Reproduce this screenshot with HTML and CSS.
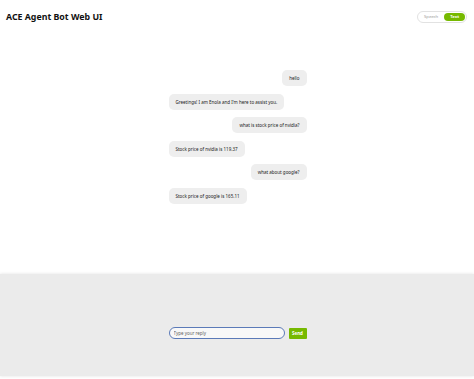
FILE: index.html
```html
<!DOCTYPE html>
<html lang="en">
<head>
<meta charset="utf-8">
<title>ACE Agent Bot Web UI</title>
<link rel="stylesheet" href="styles.css">
</head>
<body>
<div class="page">
  <header class="topbar">
    <h1 class="title">ACE Agent Bot Web UI</h1>
    <div class="toggle">
      <span class="opt">Speech</span>
      <span class="opt active">Text</span>
    </div>
  </header>
  <main class="chat">
    <div class="col">
      <div class="msg user">hello</div>
      <div class="msg bot">Greetings! I am Enola and I'm here to assist you.</div>
      <div class="msg user">what is stock price of nvidia?</div>
      <div class="msg bot">Stock price of nvidia is 119.37</div>
      <div class="msg user">what about google?</div>
      <div class="msg bot">Stock price of google is 165.11</div>
    </div>
  </main>
  <footer class="composer">
    <div class="inputrow">
      <input class="reply" type="text" placeholder="Type your reply">
      <button class="send">Send</button>
    </div>
  </footer>
</div>
</body>
</html>
```
FILE: styles.css
```css
html, body {
  margin: 0;
  padding: 0;
  background: #ffffff;
  font-family: "Noto Sans", "Open Sans", sans-serif;
  color: #1a1a1a;
}
.page {
  width: 474px;
  height: 379px;
  display: flex;
  flex-direction: column;
  overflow: hidden;
}
.topbar {
  display: flex;
  justify-content: space-between;
  align-items: center;
  padding: 9px 7px 0 6px;
  height: 16px;
}
.title {
  margin: 0;
  font-size: 8.8px;
  font-weight: 700;
  line-height: 12px;
  color: #111;
}
.toggle {
  display: flex;
  align-items: center;
  border: 1px solid #e2e2e2;
  border-radius: 6px;
  padding: 1px;
  height: 8px;
  gap: 1px;
}
.opt {
  font-size: 4.2px;
  color: #999;
  padding: 0 5px;
  line-height: 8px;
  border-radius: 5px;
}
.opt.active {
  background: #76b900;
  color: #fff;
  font-weight: 700;
  padding: 0 6px;
}
.chat {
  flex: 1;
  display: flex;
  justify-content: center;
  padding-top: 45px;
}
.col {
  width: 138px;
  margin-left: 1px;
  display: flex;
  flex-direction: column;
  gap: 7.6px;
}
.msg {
  font-size: 4.5px;
  line-height: 16px;
  padding: 0 7px;
  background: #eeeeee;
  border-radius: 5px;
  color: #222;
  white-space: nowrap;
}
.msg.user { align-self: flex-end; }
.msg.bot { align-self: flex-start; }
.composer {
  height: 102px;
  margin: 0 0 3px 0;
  background: #ebebeb;
  box-shadow: 0 0 3px rgba(0,0,0,0.12);
  display: flex;
  justify-content: center;
  align-items: flex-start;
}
.inputrow {
  margin-top: 53px;
  margin-left: 1px;
  display: flex;
  align-items: center;
  gap: 4px;
  width: 138px;
}
.reply {
  box-sizing: border-box;
  width: 116px;
  height: 12px;
  border: 1px solid #5b7ab8;
  border-radius: 6px;
  background: #f8f8f8;
  font-family: "Noto Sans", sans-serif;
  font-size: 4.5px;
  padding: 0 4px;
  outline: none;
}
.reply::placeholder { color: #666; }
.send {
  box-sizing: border-box;
  width: 18px;
  height: 11px;
  border: none;
  border-radius: 1px;
  background: #76b900;
  color: #fff;
  font-family: "Noto Sans", sans-serif;
  font-size: 4.5px;
  font-weight: 700;
  padding: 0;
}
```
